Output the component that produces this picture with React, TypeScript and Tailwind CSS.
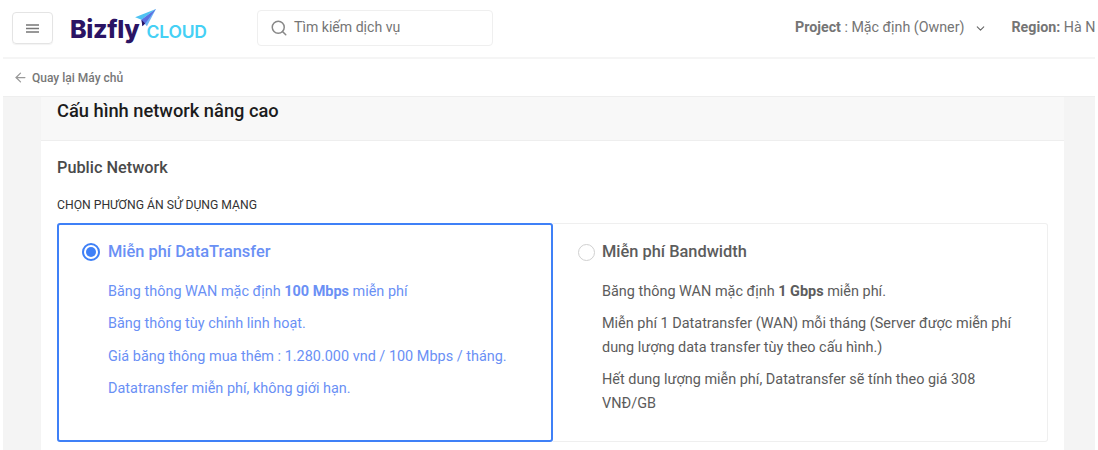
import { ArrowLeft, ChevronDown, Search } from "lucide-react";

const PlaneLogo = () => (
  <svg width="22" height="19" viewBox="0 0 24 21" className="absolute left-[65px] top-[-5px]">
    <path d="M23 0 L0 9 L7 12 Z" fill="#4fc3f2" />
    <path d="M23 0 L7 12 L13 19 Z" fill="#6fb4f5" />
    <path d="M23 0 L7 12 L8 19 L12 15 Z" fill="#5b6fe0" />
    <path d="M7 12 L8 19 L11 16 Z" fill="#2b1464" />
  </svg>
);

const Logo = () => (
  <div className="relative flex items-end shrink-0 ml-[17px] w-[137px] h-[30px] font-['Inter',sans-serif]">
    <span className="text-[25px] leading-[30px] font-extrabold tracking-[-0.3px] text-[#2b1464]">Bizfly</span>
    <span className="text-[17.5px] leading-[24px] font-semibold tracking-[-0.2px] text-[#45d0f5] ml-[7px]">CLOUD</span>
    <PlaneLogo />
  </div>
);

const Header = () => (
  <header className="h-[59px] flex items-center bg-white border-b-2 border-[#f5f5f5] overflow-hidden whitespace-nowrap mx-[3px] pl-[9px]">
    <button className="w-[41px] h-[32px] shrink-0 flex items-center justify-center border border-[#e4e4e4] rounded-[4px] mb-[1px] shadow-[0_1px_1px_rgba(0,0,0,0.05)]">
      <svg width="13" height="9" viewBox="0 0 13 9" className="text-[#777]">
        <path d="M0 1h13M0 4.5h13M0 8h13" stroke="currentColor" strokeWidth="1.3" />
      </svg>
    </button>
    <Logo />
    <div className="ml-[50px] mb-[1px] w-[236px] h-[36px] flex items-center border border-[#efefef] rounded-[4px] pl-[12px] shrink-0">
      <Search size={18} className="text-[#888]" />
      <span className="ml-[6px] text-[14.1px] text-[#757575]">Tìm kiếm dịch vụ</span>
    </div>
    <div className="ml-[302px] mb-[1px] flex items-center text-[14.25px] text-[#757575] shrink-0">
      <span className="font-bold">Project</span>
      <span>&nbsp;: Mặc định (Owner)</span>
      <ChevronDown size={13} className="ml-[10px] text-[#666]" />
      <span className="ml-[24px] font-bold">Region:</span>
      <span>&nbsp;Hà Nội</span>
    </div>
  </header>
);

const OptionCard = ({
  selected,
  title,
  children,
}: {
  selected?: boolean;
  title: string;
  children: React.ReactNode;
}) => (
  <div
    className={
      selected
        ? "w-[496px] h-[219px] shrink-0 border-2 border-[#3f80f7] rounded-[3px] pl-[23px] pr-[20px] pt-[17px] text-[#6a90f5]"
        : "w-[495px] h-[219px] shrink-0 border border-l-0 border-[#efefef] rounded-r-[3px] pl-[25px] pr-[30px] pt-[18px] text-[#5c5c5c]"
    }
  >
    <div className="flex items-center h-[20px]">
      {selected ? (
        <span className="w-[18px] h-[18px] rounded-full border-2 border-[#3f80f7] flex items-center justify-center">
          <span className="w-[10px] h-[10px] rounded-full bg-[#3f80f7]" />
        </span>
      ) : (
        <span className="w-[17px] h-[17px] rounded-full border border-[#d0d0d0]" />
      )}
      <span className={selected ? "ml-[8px] text-[16.4px] font-medium" : "ml-[7px] text-[16.4px] font-medium"}>{title}</span>
    </div>
    <div
      className={
        selected
          ? "mt-[18px] ml-[26px] flex flex-col gap-[8.3px] text-[14.45px] leading-[24px]"
          : "mt-[18px] ml-[24px] flex flex-col gap-[8px] text-[14.45px] leading-[24px]"
      }
    >
      {children}
    </div>
  </div>
);

export default function App() {
  return (
    <div className="w-[1098px] h-[450px] overflow-hidden bg-white font-['Roboto',sans-serif]">
      <Header />
      <div className="h-[38px] mx-[3px] pl-[10px] flex items-center border-b border-[#eeeeee] text-[12px] font-medium text-[#777]">
        <ArrowLeft size={15} className="text-[#999]" />
        <span className="ml-[4px]">Quay lại Máy chủ</span>
      </div>
      <main className="mx-[3px] h-[353px] bg-[#f4f4f4] px-[38px]">
        <section className="w-[1023px] h-full bg-white">
          <div className="h-[44px] bg-[#f8f8f8] border-b border-[#eeeeee] pl-[16px] flex items-start text-[18.3px] font-medium text-[#1c1c1c]">
            <span className="leading-[28px]">Cấu hình network nâng cao</span>
          </div>
          <div className="pl-[16px] pt-[17px]">
            <h3 className="text-[16.3px] leading-[20px] font-medium text-[#4a4a4a]">Public Network</h3>
            <p className="mt-[19px] text-[12.2px] leading-[16px] text-[#333]">CHỌN PHƯƠNG ÁN SỬ DỤNG MẠNG</p>
            <div className="mt-[10px] flex">
              <OptionCard selected title="Miễn phí DataTransfer">
                <p>
                  Băng thông WAN mặc định <b>100 Mbps</b> miễn phí
                </p>
                <p>Băng thông tùy chỉnh linh hoạt.</p>
                <p>Giá băng thông mua thêm : 1.280.000 vnd / 100 Mbps / tháng.</p>
                <p>Datatransfer miễn phí, không giới hạn.</p>
              </OptionCard>
              <OptionCard title="Miễn phí Bandwidth">
                <p>
                  Băng thông WAN mặc định <b>1 Gbps</b> miễn phí.
                </p>
                <p>Miễn phí 1 Datatransfer (WAN) mỗi tháng (Server được miễn phí dung lượng data transfer tùy theo cấu hình.)</p>
                <p>Hết dung lượng miễn phí, Datatransfer sẽ tính theo giá 308 VNĐ/GB</p>
              </OptionCard>
            </div>
          </div>
        </section>
      </main>
    </div>
  );
}
